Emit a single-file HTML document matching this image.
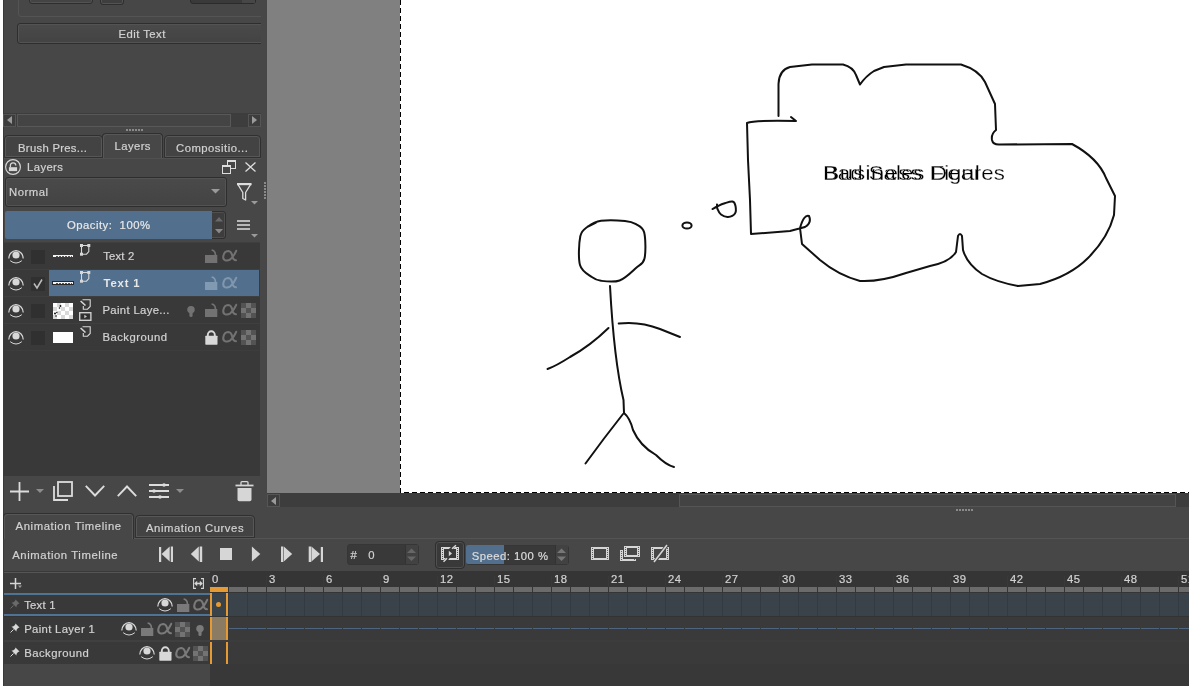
<!DOCTYPE html>
<html><head><meta charset="utf-8">
<style>
*{box-sizing:border-box;margin:0;padding:0}
html,body{width:1189px;height:686px;overflow:hidden;background:#474747;font-family:"Liberation Sans",sans-serif;font-size:11.3px;color:#d2d2d2}
.a{position:absolute}
.t{position:absolute;white-space:nowrap;line-height:1;-webkit-text-stroke:0.2px currentColor}
.btn{position:absolute;border:1px solid #2e2e2e;border-radius:3px;background:linear-gradient(#4a4a4a,#434343);box-shadow:inset 0 0 0 1px #535353}
.tab{position:absolute;border:1px solid #303030;border-radius:4px 4px 0 0;background:#434343;box-shadow:inset 0 0 0 1px #575757}
.tab.sel{background:#474747;border-bottom:none;box-shadow:inset 1px 1px 0 #575757,inset -1px 0 0 #575757}
svg{position:absolute;overflow:visible}
.clip{position:absolute;left:0;top:0;overflow:hidden}
</style></head><body>
<div class="a" style="left:0;top:0;width:3px;height:686px;background:#fff"></div>
<div class="a" style="left:3px;top:0;width:1px;height:686px;background:#3a3a3a"></div>

<!-- ===== LEFT DOCKER ===== -->
<div class="clip" style="width:261px;height:113px">
  <div class="btn" style="left:29px;top:-10px;width:64px;height:14px"></div>
  <div class="btn" style="left:100px;top:-10px;width:24px;height:15px;background:#3e3e3e"></div>
  <div class="a" style="left:190px;top:-10px;width:66px;height:14px;border:1px solid #2b2b2b;border-radius:3px;background:#3a3a3a"></div>
  <div class="a" style="left:242px;top:-10px;width:13px;height:13px;background:#474747"></div>
  <div class="a" style="left:18px;top:-10px;width:260px;height:27px;border:1px solid #545454;border-radius:3px"></div>
  <div class="btn" style="left:17px;top:23px;width:260px;height:21px"></div>
  <div class="t" style="left:118.5px;top:29.4px;letter-spacing:0.46px">Edit Text</div>
</div>
<!-- h scrollbar of tool options -->
<div class="a" style="left:3px;top:113px;width:258px;height:14px;background:#3d3d3d"></div>
<div class="a" style="left:3px;top:114px;width:13px;height:13px;border:1px solid #555"></div>
<svg style="left:7px;top:116px" width="6" height="8"><path d="M5 0 L0 4 L5 8Z" fill="#9a9a9a"/></svg>
<div class="a" style="left:17px;top:114px;width:214px;height:13px;border:1px solid #585858;background:#444"></div>
<div class="a" style="left:248px;top:114px;width:13px;height:13px;border:1px solid #555"></div>
<svg style="left:252px;top:116px" width="6" height="8"><path d="M0 0 L5 4 L0 8Z" fill="#9a9a9a"/></svg>
<!-- splitter dots -->
<div class="a" style="left:126px;top:129px;width:17px;height:2px;background-image:linear-gradient(90deg,#8a8a8a 2px,transparent 2px);background-size:3px 2px"></div>

<!-- tabs -->

<div class="tab" style="left:4px;top:135px;width:99px;height:23px"></div>
<div class="t" style="left:18px;top:142.6px;letter-spacing:0.29px">Brush Pres...</div>
<div class="tab sel" style="left:102px;top:133px;width:61px;height:25px"></div>
<div class="t" style="left:114.5px;top:141.2px;letter-spacing:0.42px">Layers</div>
<div class="tab" style="left:164px;top:135px;width:97px;height:23px"></div>
<div class="t" style="left:176px;top:142.6px;letter-spacing:0.49px">Compositio...</div>

<div class="a" style="left:4px;top:158px;width:257px;height:1px;background:#505050"></div>
<!-- Layers title -->
<svg style="left:5px;top:159px" width="17" height="17" viewBox="0 0 17 17"><circle cx="8" cy="8" r="7.4" fill="none" stroke="#d6d6d6" stroke-width="1.2"/><path d="M5.4 8.3 V6.6 A2.7 2.7 0 0 1 10.8 6.4" fill="none" stroke="#d6d6d6" stroke-width="1.3"/><rect x="3.9" y="8.2" width="8.2" height="3.9" fill="#d6d6d6"/></svg>
<div class="t" style="left:27.1px;top:162.4px;letter-spacing:0.38px">Layers</div>
<svg style="left:222px;top:160px" width="15" height="15"><rect x="5.5" y="0.5" width="8" height="8" fill="none" stroke="#ddd"/><rect x="5" y="0" width="9" height="2" fill="#ddd"/><rect x="0.5" y="5.5" width="8" height="8" fill="#474747" stroke="#ddd"/><rect x="0" y="5" width="9" height="2" fill="#ddd"/></svg>
<svg style="left:245px;top:162px" width="11" height="10"><path d="M0.5 0.5 L10.5 9.5 M10.5 0.5 L0.5 9.5" stroke="#ddd" stroke-width="1.3"/></svg>

<!-- combo -->
<div class="btn" style="left:5px;top:177px;width:222px;height:30px"></div>
<div class="t" style="left:9.1px;top:187.2px;letter-spacing:0.52px">Normal</div>
<svg style="left:211px;top:189px" width="9" height="5"><path d="M0 0H9L4.5 4.5Z" fill="#9a9a9a"/></svg>
<svg style="left:237px;top:183px" width="15" height="18"><path d="M0.7 1.2 H13.8 L8.6 9.5 V17 L5.8 15.5 V9.5 Z" fill="none" stroke="#ddd" stroke-width="1.3" stroke-linejoin="round"/><rect x="0" y="0" width="14.5" height="2.2" fill="#ddd"/></svg>
<svg style="left:251px;top:201px" width="7" height="4"><path d="M0 0H7L3.5 3.5Z" fill="#9a9a9a"/></svg>
<div class="a" style="left:264px;top:182px;width:2px;height:17px;background-image:linear-gradient(#8a8a8a 2px,transparent 2px);background-size:2px 3px"></div>

<!-- opacity -->
<div class="a" style="left:5px;top:211px;width:221px;height:28px;border:1px solid #2f2f2f;border-radius:3px;background:#3d3d3d;box-shadow:inset 0 0 0 1px #4f4f4f"></div>
<div class="a" style="left:5px;top:211px;width:207px;height:28px;background:#526f8d;border-radius:2px 0 0 2px"></div>
<div class="t" style="left:67px;top:220.4px;letter-spacing:0.49px;color:#e8e8e8">Opacity:&nbsp; 100%</div>
<svg style="left:215px;top:217px" width="8" height="5"><path d="M0 4.5H8L4 0Z" fill="#6a6a6a"/></svg>
<svg style="left:215px;top:229px" width="8" height="5"><path d="M0 0H8L4 4.5Z" fill="#8a8a8a"/></svg>
<svg style="left:237px;top:220px" width="13" height="10"><path d="M0 1H13M0 5H13M0 9H13" stroke="#ddd" stroke-width="1.6"/></svg>
<svg style="left:251px;top:234px" width="7" height="4"><path d="M0 0H7L3.5 3.5Z" fill="#9a9a9a"/></svg>

<!-- layer list -->
<div class="a" style="left:4px;top:242px;width:256px;height:234px;background:#393939"></div>
<div class="a" style="left:4px;top:242px;width:256px;height:1px;background:#3f3f3f"></div>
<svg style="left:8px;top:250px" width="16" height="15" viewBox="0 0 16 15"><path d="M0.8 8.6 A7.2 7.9 0 0 1 15.2 8.6" fill="none" stroke="#d8d8d8" stroke-width="1.2"/><circle cx="8" cy="5" r="3.6" fill="#d8d8d8"/><path d="M2.2 10.7 Q8 15.3 13.8 10.7" fill="none" stroke="#d8d8d8" stroke-width="1.0"/></svg>
<div class="a" style="left:31px;top:250px;width:14px;height:14px;background:#303030"></div>
<div class="a" style="left:53px;top:255px;width:20px;height:2px;background:#f4f4f4"></div>
<div class="a" style="left:56px;top:256px;width:16px;height:1px;background-image:linear-gradient(90deg,#555 2px,transparent 2px);background-size:3px 1px"></div>
<svg style="left:80px;top:244px" width="11" height="12" viewBox="0 0 11 12"><path d="M1.5 1.5 H8.8 V7.5 L6.5 10.2 H1.5 Z" fill="none" stroke="#d8d8d8" stroke-width="1.1"/><rect x="0" y="0" width="3" height="3" fill="#d8d8d8"/><rect x="7.3" y="0" width="3" height="3" fill="#d8d8d8"/><rect x="0" y="8.7" width="3" height="3" fill="#d8d8d8"/></svg>
<div class="t" style="left:103.2px;top:251.4px;letter-spacing:0.17px;color:#d2d2d2;font-weight:normal">Text 2</div>
<svg style="left:205px;top:249px" width="13" height="15" viewBox="0 0 13 15"><path d="M6.6 1 Q10.2 1.6 10.4 5.5 V6.5" fill="none" stroke="#727272" stroke-width="1.7"/><rect x="0" y="6" width="12.3" height="8" fill="#727272"/></svg>
<svg style="left:222px;top:250px" width="15" height="12" viewBox="0 0 15 12"><path d="M14.2 0.8 Q11.5 6.8 8.3 9.3 Q5.8 11 3.2 10.3 Q0.8 9.5 1.3 6.2 Q2.2 1.2 6.3 1.1 Q9.2 1.2 10.4 6.2 Q11.3 10.2 14 10.3" fill="none" stroke="#727272" stroke-width="2.05" stroke-linecap="round"/></svg>
<div class="a" style="left:4px;top:269px;width:256px;height:1px;background:#3f3f3f"></div>
<div class="a" style="left:49px;top:270px;width:210px;height:26px;background:#526f8d"></div>
<svg style="left:8px;top:277px" width="16" height="15" viewBox="0 0 16 15"><path d="M0.8 8.6 A7.2 7.9 0 0 1 15.2 8.6" fill="none" stroke="#d8d8d8" stroke-width="1.2"/><circle cx="8" cy="5" r="3.6" fill="#d8d8d8"/><path d="M2.2 10.7 Q8 15.3 13.8 10.7" fill="none" stroke="#d8d8d8" stroke-width="1.0"/></svg>
<div class="a" style="left:31px;top:277px;width:14px;height:14px;background:#303030"></div>
<svg style="left:33px;top:279px" width="10" height="10"><path d="M1 4.5 L4 9 L9 0.5" fill="none" stroke="#bdbdbd" stroke-width="1.5"/></svg>
<div class="a" style="left:52px;top:281px;width:22px;height:4px;background:#262626"></div>
<div class="a" style="left:53px;top:282px;width:20px;height:2px;background:#f4f4f4"></div>
<div class="a" style="left:56px;top:283px;width:16px;height:1px;background-image:linear-gradient(90deg,#555 2px,transparent 2px);background-size:3px 1px"></div>
<svg style="left:80px;top:271px" width="11" height="12" viewBox="0 0 11 12"><path d="M1.5 1.5 H8.8 V7.5 L6.5 10.2 H1.5 Z" fill="none" stroke="#d8d8d8" stroke-width="1.1"/><rect x="0" y="0" width="3" height="3" fill="#d8d8d8"/><rect x="7.3" y="0" width="3" height="3" fill="#d8d8d8"/><rect x="0" y="8.7" width="3" height="3" fill="#d8d8d8"/></svg>
<div class="t" style="left:103.5px;top:278.0px;letter-spacing:0.84px;color:#e8e8e8;font-weight:bold;-webkit-text-stroke:0">Text 1</div>
<svg style="left:205px;top:276px" width="13" height="15" viewBox="0 0 13 15"><path d="M6.6 1 Q10.2 1.6 10.4 5.5 V6.5" fill="none" stroke="#8199b1" stroke-width="1.7"/><rect x="0" y="6" width="12.3" height="8" fill="#8199b1"/></svg>
<svg style="left:222px;top:277px" width="15" height="12" viewBox="0 0 15 12"><path d="M14.2 0.8 Q11.5 6.8 8.3 9.3 Q5.8 11 3.2 10.3 Q0.8 9.5 1.3 6.2 Q2.2 1.2 6.3 1.1 Q9.2 1.2 10.4 6.2 Q11.3 10.2 14 10.3" fill="none" stroke="#7f96ad" stroke-width="2.05" stroke-linecap="round"/></svg>
<div class="a" style="left:4px;top:296px;width:256px;height:1px;background:#3f3f3f"></div>
<svg style="left:8px;top:304px" width="16" height="15" viewBox="0 0 16 15"><path d="M0.8 8.6 A7.2 7.9 0 0 1 15.2 8.6" fill="none" stroke="#d8d8d8" stroke-width="1.2"/><circle cx="8" cy="5" r="3.6" fill="#d8d8d8"/><path d="M2.2 10.7 Q8 15.3 13.8 10.7" fill="none" stroke="#d8d8d8" stroke-width="1.0"/></svg>
<div class="a" style="left:31px;top:304px;width:14px;height:14px;background:#303030"></div>
<svg style="left:53px;top:303px" width="20" height="14" viewBox="0 0 20 14"><rect x="0" y="0" width="4" height="4" fill="#ffffff"/><rect x="0" y="4" width="4" height="4" fill="#d9d9d9"/><rect x="0" y="8" width="4" height="4" fill="#ffffff"/><rect x="0" y="12" width="4" height="4" fill="#d9d9d9"/><rect x="4" y="0" width="4" height="4" fill="#d9d9d9"/><rect x="4" y="4" width="4" height="4" fill="#ffffff"/><rect x="4" y="8" width="4" height="4" fill="#d9d9d9"/><rect x="4" y="12" width="4" height="4" fill="#ffffff"/><rect x="8" y="0" width="4" height="4" fill="#ffffff"/><rect x="8" y="4" width="4" height="4" fill="#d9d9d9"/><rect x="8" y="8" width="4" height="4" fill="#ffffff"/><rect x="8" y="12" width="4" height="4" fill="#d9d9d9"/><rect x="12" y="0" width="4" height="4" fill="#d9d9d9"/><rect x="12" y="4" width="4" height="4" fill="#ffffff"/><rect x="12" y="8" width="4" height="4" fill="#d9d9d9"/><rect x="12" y="12" width="4" height="4" fill="#ffffff"/><rect x="16" y="0" width="4" height="4" fill="#ffffff"/><rect x="16" y="4" width="4" height="4" fill="#d9d9d9"/><rect x="16" y="8" width="4" height="4" fill="#ffffff"/><rect x="16" y="12" width="4" height="4" fill="#d9d9d9"/><circle cx="7.5" cy="3" r="0.9" fill="#111"/><circle cx="6.5" cy="5" r="0.8" fill="#111"/><circle cx="2" cy="10.5" r="1" fill="#111"/><circle cx="3.8" cy="9.5" r="0.7" fill="#111"/><circle cx="3" cy="13" r="0.8" fill="#111"/></svg>
<svg style="left:80px;top:299px" width="11" height="11" viewBox="0 0 11 11"><path d="M2.5 0.8 H10.2 V7.5 L7.5 10.2 H3.3 V7" fill="none" stroke="#d8d8d8" stroke-width="1.1"/><path d="M0.6 2 L5.5 6.5" stroke="#d8d8d8" stroke-width="1.6"/></svg>
<svg style="left:79px;top:312px" width="13" height="9" viewBox="0 0 13 9"><rect x="0.7" y="0.7" width="11.2" height="7.6" fill="none" stroke="#d8d8d8" stroke-width="1.3"/><rect x="2.3" y="2.3" width="8" height="4.4" fill="#2e2e2e"/><path d="M5.3 2.8 V6.2 L8 4.5Z" fill="#c8c8c8"/></svg>
<div class="t" style="left:102.4px;top:304.5px;letter-spacing:0.35px;color:#d2d2d2;font-weight:normal">Paint Laye...</div>
<svg style="left:205px;top:303px" width="13" height="15" viewBox="0 0 13 15"><path d="M6.6 1 Q10.2 1.6 10.4 5.5 V6.5" fill="none" stroke="#727272" stroke-width="1.7"/><rect x="0" y="6" width="12.3" height="8" fill="#727272"/></svg>
<svg style="left:222px;top:304px" width="15" height="12" viewBox="0 0 15 12"><path d="M14.2 0.8 Q11.5 6.8 8.3 9.3 Q5.8 11 3.2 10.3 Q0.8 9.5 1.3 6.2 Q2.2 1.2 6.3 1.1 Q9.2 1.2 10.4 6.2 Q11.3 10.2 14 10.3" fill="none" stroke="#727272" stroke-width="2.05" stroke-linecap="round"/></svg>
<svg style="left:241px;top:303px" width="15" height="15"><rect x="0" y="0" width="5" height="5" fill="#535353"/><rect x="0" y="5" width="5" height="5" fill="#737373"/><rect x="0" y="10" width="5" height="5" fill="#535353"/><rect x="5" y="0" width="5" height="5" fill="#737373"/><rect x="5" y="5" width="5" height="5" fill="#535353"/><rect x="5" y="10" width="5" height="5" fill="#737373"/><rect x="10" y="0" width="5" height="5" fill="#535353"/><rect x="10" y="5" width="5" height="5" fill="#737373"/><rect x="10" y="10" width="5" height="5" fill="#535353"/></svg>
<svg style="left:187px;top:306px" width="8" height="11" viewBox="0 0 8 11"><path d="M4 0 A3.8 3.9 0 0 1 7.8 3.9 Q7.8 5.8 5.6 7.3 V9.8 Q5.6 11 4 11 Q2.4 11 2.4 9.8 V7.3 Q0.2 5.8 0.2 3.9 A3.8 3.9 0 0 1 4 0Z" fill="#727272"/></svg>
<div class="a" style="left:4px;top:323px;width:256px;height:1px;background:#3f3f3f"></div>
<svg style="left:8px;top:331px" width="16" height="15" viewBox="0 0 16 15"><path d="M0.8 8.6 A7.2 7.9 0 0 1 15.2 8.6" fill="none" stroke="#d8d8d8" stroke-width="1.2"/><circle cx="8" cy="5" r="3.6" fill="#d8d8d8"/><path d="M2.2 10.7 Q8 15.3 13.8 10.7" fill="none" stroke="#d8d8d8" stroke-width="1.0"/></svg>
<div class="a" style="left:31px;top:331px;width:14px;height:14px;background:#303030"></div>
<div class="a" style="left:53px;top:332px;width:20px;height:11px;background:#fff"></div>
<svg style="left:80px;top:326px" width="11" height="11" viewBox="0 0 11 11"><path d="M2.5 0.8 H10.2 V7.5 L7.5 10.2 H3.3 V7" fill="none" stroke="#d8d8d8" stroke-width="1.1"/><path d="M0.6 2 L5.5 6.5" stroke="#d8d8d8" stroke-width="1.6"/></svg>
<div class="t" style="left:102.4px;top:331.6px;letter-spacing:0.49px;color:#d2d2d2;font-weight:normal">Background</div>
<svg style="left:205px;top:330px" width="13" height="15" viewBox="0 0 13 15"><path d="M2.8 6.5 V5 A3.5 3.7 0 0 1 9.8 5 V6.5" fill="none" stroke="#d8d8d8" stroke-width="1.9"/><rect x="0.3" y="5.7" width="12.2" height="9" rx="0.6" fill="#d8d8d8"/></svg>
<svg style="left:222px;top:331px" width="15" height="12" viewBox="0 0 15 12"><path d="M14.2 0.8 Q11.5 6.8 8.3 9.3 Q5.8 11 3.2 10.3 Q0.8 9.5 1.3 6.2 Q2.2 1.2 6.3 1.1 Q9.2 1.2 10.4 6.2 Q11.3 10.2 14 10.3" fill="none" stroke="#727272" stroke-width="2.05" stroke-linecap="round"/></svg>
<svg style="left:241px;top:330px" width="15" height="15"><rect x="0" y="0" width="5" height="5" fill="#535353"/><rect x="0" y="5" width="5" height="5" fill="#737373"/><rect x="0" y="10" width="5" height="5" fill="#535353"/><rect x="5" y="0" width="5" height="5" fill="#737373"/><rect x="5" y="5" width="5" height="5" fill="#535353"/><rect x="5" y="10" width="5" height="5" fill="#737373"/><rect x="10" y="0" width="5" height="5" fill="#535353"/><rect x="10" y="5" width="5" height="5" fill="#737373"/><rect x="10" y="10" width="5" height="5" fill="#535353"/></svg>
<div class="a" style="left:4px;top:350px;width:256px;height:1px;background:#3d3d3d"></div>

<!-- bottom toolbar -->
<svg style="left:10px;top:482px" width="19" height="19"><path d="M9.5 0V19M0 9.5H19" stroke="#dcdcdc" stroke-width="1.8"/></svg>
<svg style="left:36px;top:489px" width="8" height="5"><path d="M0 0H8L4 4Z" fill="#8d8d8d"/></svg>
<svg style="left:53px;top:481px" width="20" height="20"><rect x="5" y="1" width="14" height="14" fill="none" stroke="#dcdcdc" stroke-width="1.8"/><path d="M1 5V19H15" fill="none" stroke="#dcdcdc" stroke-width="1.8"/></svg>
<svg style="left:85px;top:485px" width="20" height="12"><path d="M0.8 0.8 L10 10.5 L19.2 0.8" fill="none" stroke="#dcdcdc" stroke-width="1.9"/></svg>
<svg style="left:117px;top:485px" width="20" height="12"><path d="M0.8 11.2 L10 1.5 L19.2 11.2" fill="none" stroke="#dcdcdc" stroke-width="1.9"/></svg>
<svg style="left:149px;top:483px" width="20" height="16"><path d="M0 2H20M0 8H20M0 14H20" stroke="#dcdcdc" stroke-width="1.8"/><circle cx="15" cy="2" r="1.8" fill="#dcdcdc"/><circle cx="5" cy="8" r="1.8" fill="#dcdcdc"/><circle cx="11" cy="14" r="1.8" fill="#dcdcdc"/></svg>
<svg style="left:176px;top:489px" width="8" height="5"><path d="M0 0H8L4 4Z" fill="#8d8d8d"/></svg>
<svg style="left:235px;top:481px" width="19" height="21"><path d="M0.5 4.5H18.5" stroke="#d6d6d6" stroke-width="1.8"/><path d="M6 4V1.5Q6 0.6 7 0.6H12Q13 0.6 13 1.5V4" fill="none" stroke="#d6d6d6" stroke-width="1.3"/><path d="M2.5 7H16.5V18.5Q16.5 20.3 14.7 20.3H4.3Q2.5 20.3 2.5 18.5Z" fill="#d6d6d6"/></svg>

<!-- ===== CANVAS ===== -->
<div class="a" style="left:267px;top:0;width:922px;height:493px;background:#808080;overflow:hidden">
  <div class="a" style="left:133px;top:-10px;width:800px;height:503px;background:#fff"></div>
  <div class="a" style="left:133px;top:0;width:1px;height:493px;background-image:linear-gradient(#000 5px,transparent 5px);background-size:1px 8px"></div>
  <div class="a" style="left:133px;top:492px;width:800px;height:1px;background-image:linear-gradient(90deg,#000 5px,transparent 5px);background-size:8px 1px;background-position:-4px 0"></div>
  <svg style="left:-267px;top:0" width="1189" height="493" viewBox="0 0 1189 493">
<g fill="none" stroke="#111" stroke-width="2" stroke-linecap="round" stroke-linejoin="round">
<!-- cloud -->
<path d="M778.5 116 L778.5 84 Q779 70 790 67 L812 64.5 L843 64.5 Q853 67 856 75 L860 84.5 Q866 76 874 71 L884 67 L906 64.5 L961 64.5 Q979 70 985 82 L995 104 L996 130 Q991 134 992 140 Q993 145 1000 144.5 L1072 144 Q1098 158 1106 178 L1115 196 L1114 215 Q1108 238 1088 258 Q1070 276 1040 284 L1018 286 Q996 282 982 274 Q967 264 963 250 L962 236 Q960 232 958 236 L956 252 Q950 262 930 266 L906 273 Q880 282 860 281 Q838 275 820 260 L802 244 L800 228 Q804 214 809 216 Q812 223 805 227 L790 231 L751 234 L750 200 L748 160 L747 123 Q755 120 796 121 L791 117"/>
<!-- head -->
<path d="M588 226.5 C591.5 223.9 594.8 221.7 601 220.8 C607.2 219.9 619.2 220.4 625 221 C630.8 221.6 632.8 222.3 636 224.2 C639.2 226.1 642.8 226.9 644.2 232.6 C645.6 238.3 645.9 252.6 644.5 258.5 C643.1 264.4 640.1 264.3 636 268 C631.9 271.7 625.4 278.4 619.6 280.5 C613.8 282.6 605.6 281.4 601 280.8 C596.4 280.2 595.3 279.6 591.8 277 C588.3 274.4 581.9 271.8 580 265 C578.1 258.2 579.0 242.7 580.3 236.3 C581.6 229.9 584.5 229.1 588 226.5 M588 226.5 L596 222.5"/>
<!-- body -->
<path d="M610 286 Q614 360 623.5 400 L624 413"/>
<path d="M608.5 328 Q590 346 570 357 Q556 366 547.5 369"/>
<path d="M618.7 323.5 Q640 321 660 329 L680 337"/>
<path d="M623 414 Q604 438 585.5 463.5"/>
<path d="M624 413 Q630 418 633 430 Q640 446 656 455 Q666 465 674 467"/>
<!-- bubbles -->
<ellipse cx="687" cy="225.5" rx="4.6" ry="3.1"/>
<path d="M712.5 209 C713.4 208.5 716.1 206.9 718 206 C719.9 205.1 721.6 204.2 724 203.5 C726.4 202.8 730.6 201.1 732.5 201.5 C734.4 201.9 735.1 204.0 735.5 206 C735.9 208.0 736.2 211.7 735 213.5 C733.8 215.3 730.3 216.8 728 217 C725.7 217.2 722.8 215.8 721 214.5 C719.2 213.2 718.2 210.7 717.5 209 C716.8 207.3 717.1 205.2 717 204.5"/>
</g>
<g font-family="Liberation Sans" font-size="21" fill="#000" stroke="#fff" stroke-width="0.25">
<text transform="translate(823 179.5) scale(1.06 1)" style="mix-blend-mode:darken">Bad Sales Figures</text>
<text transform="translate(823 179.5) scale(1.17 1)" style="mix-blend-mode:darken">Business Deal</text>
</g>
</svg>

</div>

<!-- canvas h scrollbar -->
<div class="a" style="left:267px;top:493px;width:922px;height:14px;background:#3d3d3d"></div>
<div class="a" style="left:267px;top:494px;width:13px;height:13px;border:1px solid #555"></div>
<svg style="left:271px;top:497px" width="6" height="8"><path d="M5 0 L0 4 L5 8Z" fill="#9a9a9a"/></svg>
<div class="a" style="left:679px;top:494px;width:497px;height:13px;border:1px solid #555;background:#434343"></div>
<div class="a" style="left:956px;top:509px;width:17px;height:2px;background-image:linear-gradient(90deg,#8a8a8a 2px,transparent 2px);background-size:3px 2px"></div>

<!-- ===== TIMELINE DOCKER ===== -->
<div class="a" style="left:4px;top:538px;width:1185px;height:1px;background:#545454"></div>
<div class="tab sel" style="left:3px;top:513px;width:131px;height:26px"></div>
<div class="t" style="left:15.5px;top:520.5px;letter-spacing:0.6px">Animation Timeline</div>
<div class="tab" style="left:135px;top:515px;width:120px;height:23px"></div>
<div class="t" style="left:146px;top:522.5px;letter-spacing:0.56px">Animation Curves</div>
<div class="t" style="left:12.2px;top:550.1px;letter-spacing:0.59px">Animation Timeline</div>
<svg style="left:158px;top:546px" width="16" height="16" viewBox="0 0 16 16"><rect x="1" y="1" width="2.2" height="15" fill="#d6d6d6"/><path d="M11.7 0.5 V15.5 L3.6 8Z" fill="#d6d6d6"/><rect x="12.8" y="0.5" width="2.2" height="15.5" fill="#d6d6d6"/></svg>
<svg style="left:190px;top:546px" width="13" height="16" viewBox="0 0 13 16"><path d="M8.8 0.5 V15.5 L0.8 8Z" fill="#d6d6d6"/><rect x="9.7" y="0.5" width="2.5" height="15.5" fill="#d6d6d6"/></svg>
<div class="a" style="left:220px;top:548px;width:12px;height:12px;background:#d6d6d6"></div>
<svg style="left:251px;top:546px" width="10" height="16" viewBox="0 0 10 16"><path d="M0.9 0.5 V15.5 L9.3 8Z" fill="#d6d6d6"/></svg>
<svg style="left:281px;top:546px" width="12" height="16" viewBox="0 0 12 16"><rect x="0" y="0.5" width="2.3" height="15.5" fill="#d6d6d6"/><path d="M2.8 0.5 V15.5 L11.2 8Z" fill="#d6d6d6"/></svg>
<svg style="left:308px;top:546px" width="16" height="16" viewBox="0 0 16 16"><rect x="0.7" y="0.5" width="2.5" height="15.5" fill="#d6d6d6"/><path d="M3.5 0.5 V15.5 L12 8Z" fill="#d6d6d6"/><rect x="12.8" y="1" width="2.2" height="15" fill="#d6d6d6"/></svg>
<div class="a" style="left:347px;top:544px;width:72px;height:21px;border:1px solid #363636;border-radius:3px;background:#393939"></div>
<div class="a" style="left:405px;top:545px;width:13px;height:19px;background:#424242;border-left:1px solid #333"></div>
<svg style="left:407px;top:548px" width="9" height="14"><path d="M0 5H9L4.5 0.5Z" fill="#666"/><path d="M0 8.5H9L4.5 13Z" fill="#666"/></svg>
<div class="t" style="left:350.6px;top:549.6px;letter-spacing:0.5px">#&nbsp;&nbsp; 0</div>
<div class="a" style="left:435px;top:541px;width:30px;height:28px;border:1px solid #2e2e2e;border-radius:4px;background:#393939;box-shadow:inset 0 0 0 1px #505050"></div>
<svg style="left:441px;top:547px" width="19" height="15" viewBox="0 0 19 15"><rect x="0" y="0" width="18" height="13" fill="#d6d6d6"/><rect x="3" y="2" width="12" height="9" fill="#393939"/><circle cx="1.5" cy="1.5" r="0.55" fill="#393939"/><circle cx="16.5" cy="1.5" r="0.55" fill="#393939"/><circle cx="1.5" cy="3.5" r="0.55" fill="#393939"/><circle cx="16.5" cy="3.5" r="0.55" fill="#393939"/><circle cx="1.5" cy="5.5" r="0.55" fill="#393939"/><circle cx="16.5" cy="5.5" r="0.55" fill="#393939"/><circle cx="1.5" cy="7.5" r="0.55" fill="#393939"/><circle cx="16.5" cy="7.5" r="0.55" fill="#393939"/><circle cx="1.5" cy="9.5" r="0.55" fill="#393939"/><circle cx="16.5" cy="9.5" r="0.55" fill="#393939"/><circle cx="1.5" cy="11.5" r="0.55" fill="#393939"/><circle cx="16.5" cy="11.5" r="0.55" fill="#393939"/><path d="M7.8 3.8 V9.2 L11 6.5Z" fill="#d6d6d6"/><path d="M9 3 L14.5 -2.5 M3 15 L7.5 10.5" stroke="#393939" stroke-width="3"/><path d="M11 1.7 L15 -1.8 M2.5 14.8 L6 11.3" stroke="#d6d6d6" stroke-width="1.5"/></svg>
<div class="a" style="left:466px;top:545px;width:103px;height:20px;border-radius:3px;background:#393939;border:1px solid #363636"></div>
<div class="a" style="left:466px;top:545px;width:38px;height:19px;background:#526f8d;border-radius:2px 0 0 2px"></div>
<div class="a" style="left:555px;top:545px;width:13px;height:19px;background:#424242;border-left:1px solid #333"></div>
<svg style="left:557px;top:548px" width="9" height="14"><path d="M0 5H9L4.5 0.5Z" fill="#777"/><path d="M0 8.5H9L4.5 13Z" fill="#777"/></svg>
<div class="t" style="left:471.7px;top:550.6px;letter-spacing:0.48px;color:#dcdcdc">Speed: 100 %</div>
<svg style="left:591px;top:547px" width="18" height="13"><rect x="0" y="0" width="18" height="13" fill="#d6d6d6"/><rect x="3" y="2" width="12" height="9" fill="#474747"/><circle cx="1.5" cy="1.5" r="0.55" fill="#474747"/><circle cx="16.5" cy="1.5" r="0.55" fill="#474747"/><circle cx="1.5" cy="3.5" r="0.55" fill="#474747"/><circle cx="16.5" cy="3.5" r="0.55" fill="#474747"/><circle cx="1.5" cy="5.5" r="0.55" fill="#474747"/><circle cx="16.5" cy="5.5" r="0.55" fill="#474747"/><circle cx="1.5" cy="7.5" r="0.55" fill="#474747"/><circle cx="16.5" cy="7.5" r="0.55" fill="#474747"/><circle cx="1.5" cy="9.5" r="0.55" fill="#474747"/><circle cx="16.5" cy="9.5" r="0.55" fill="#474747"/><circle cx="1.5" cy="11.5" r="0.55" fill="#474747"/><circle cx="16.5" cy="11.5" r="0.55" fill="#474747"/></svg>
<svg style="left:620px;top:546px" width="21" height="16"><g transform="translate(0,4)"><rect x="0" y="0" width="16" height="11" fill="#d6d6d6"/><rect x="3" y="2" width="10" height="7" fill="#474747"/><circle cx="1.5" cy="1.5" r="0.55" fill="#474747"/><circle cx="14.5" cy="1.5" r="0.55" fill="#474747"/><circle cx="1.5" cy="3.5" r="0.55" fill="#474747"/><circle cx="14.5" cy="3.5" r="0.55" fill="#474747"/><circle cx="1.5" cy="5.5" r="0.55" fill="#474747"/><circle cx="14.5" cy="5.5" r="0.55" fill="#474747"/><circle cx="1.5" cy="7.5" r="0.55" fill="#474747"/><circle cx="14.5" cy="7.5" r="0.55" fill="#474747"/><circle cx="1.5" cy="9.5" r="0.55" fill="#474747"/><circle cx="14.5" cy="9.5" r="0.55" fill="#474747"/></g><rect x="3" y="-1" width="18" height="14" fill="#474747"/><g transform="translate(4,0)"><rect x="0" y="0" width="16" height="11" fill="#d6d6d6"/><rect x="3" y="2" width="10" height="7" fill="#474747"/><circle cx="1.5" cy="1.5" r="0.55" fill="#474747"/><circle cx="14.5" cy="1.5" r="0.55" fill="#474747"/><circle cx="1.5" cy="3.5" r="0.55" fill="#474747"/><circle cx="14.5" cy="3.5" r="0.55" fill="#474747"/><circle cx="1.5" cy="5.5" r="0.55" fill="#474747"/><circle cx="14.5" cy="5.5" r="0.55" fill="#474747"/><circle cx="1.5" cy="7.5" r="0.55" fill="#474747"/><circle cx="14.5" cy="7.5" r="0.55" fill="#474747"/><circle cx="1.5" cy="9.5" r="0.55" fill="#474747"/><circle cx="14.5" cy="9.5" r="0.55" fill="#474747"/></g></svg>
<svg style="left:651px;top:545px" width="19" height="18"><g transform="translate(0,2)"><rect x="0" y="0" width="18" height="13" fill="#d6d6d6"/><rect x="3" y="2" width="12" height="9" fill="#474747"/><circle cx="1.5" cy="1.5" r="0.55" fill="#474747"/><circle cx="16.5" cy="1.5" r="0.55" fill="#474747"/><circle cx="1.5" cy="3.5" r="0.55" fill="#474747"/><circle cx="16.5" cy="3.5" r="0.55" fill="#474747"/><circle cx="1.5" cy="5.5" r="0.55" fill="#474747"/><circle cx="16.5" cy="5.5" r="0.55" fill="#474747"/><circle cx="1.5" cy="7.5" r="0.55" fill="#474747"/><circle cx="16.5" cy="7.5" r="0.55" fill="#474747"/><circle cx="1.5" cy="9.5" r="0.55" fill="#474747"/><circle cx="16.5" cy="9.5" r="0.55" fill="#474747"/><circle cx="1.5" cy="11.5" r="0.55" fill="#474747"/><circle cx="16.5" cy="11.5" r="0.55" fill="#474747"/></g><path d="M16.5 -0.5 L3 17.5" stroke="#474747" stroke-width="3.5"/><path d="M16 0 L3 17" stroke="#d6d6d6" stroke-width="1.6"/></svg>
<div class="a" style="left:4px;top:571px;width:206px;height:1px;background:#393939"></div>
<div class="a" style="left:4px;top:572px;width:206px;height:1px;background:#555"></div>
<div class="a" style="left:4px;top:573px;width:206px;height:20px;background:#3b3b3b"></div>
<svg style="left:10px;top:578px" width="13" height="11"><path d="M5.5 0V11M0 5.5H11" stroke="#d6d6d6" stroke-width="1.5"/><path d="M8 7.5H12L10 10Z" fill="#999"/></svg>
<svg style="left:193px;top:578px" width="11" height="11" viewBox="0 0 11 11"><path d="M3 0.6 H0.6 V10.4 H3 M8 0.6 H10.4 V10.4 H8" fill="none" stroke="#d6d6d6" stroke-width="1.1"/><path d="M2.5 5.5 H8.5" stroke="#d6d6d6" stroke-width="1.6"/><path d="M1.2 5.5 L4.2 2.8 V8.2Z M9.8 5.5 L6.8 2.8 V8.2Z" fill="#d6d6d6"/></svg>
<div class="a" style="left:210px;top:571px;width:979px;height:22px;background:#353535"></div>
<div class="a" style="left:210px;top:587px;width:18px;height:5px;background:#e69a33"></div>
<div class="t" style="left:212px;top:573.9px;letter-spacing:0.5px;color:#d2d2d2">0</div>
<div class="a" style="left:229px;top:587px;width:18px;height:5px;background:#6b6b6b"></div>
<div class="a" style="left:248px;top:587px;width:18px;height:5px;background:#6b6b6b"></div>
<div class="a" style="left:267px;top:587px;width:18px;height:5px;background:#6b6b6b"></div>
<div class="a" style="left:266px;top:576px;width:1px;height:11px;background:#393939"></div>
<div class="t" style="left:269px;top:573.9px;letter-spacing:0.5px;color:#d2d2d2">3</div>
<div class="a" style="left:286px;top:587px;width:18px;height:5px;background:#6b6b6b"></div>
<div class="a" style="left:305px;top:587px;width:18px;height:5px;background:#6b6b6b"></div>
<div class="a" style="left:324px;top:587px;width:18px;height:5px;background:#6b6b6b"></div>
<div class="a" style="left:323px;top:576px;width:1px;height:11px;background:#393939"></div>
<div class="t" style="left:326px;top:573.9px;letter-spacing:0.5px;color:#d2d2d2">6</div>
<div class="a" style="left:343px;top:587px;width:18px;height:5px;background:#6b6b6b"></div>
<div class="a" style="left:362px;top:587px;width:18px;height:5px;background:#6b6b6b"></div>
<div class="a" style="left:381px;top:587px;width:18px;height:5px;background:#6b6b6b"></div>
<div class="a" style="left:380px;top:576px;width:1px;height:11px;background:#393939"></div>
<div class="t" style="left:383px;top:573.9px;letter-spacing:0.5px;color:#d2d2d2">9</div>
<div class="a" style="left:400px;top:587px;width:18px;height:5px;background:#6b6b6b"></div>
<div class="a" style="left:419px;top:587px;width:18px;height:5px;background:#6b6b6b"></div>
<div class="a" style="left:438px;top:587px;width:18px;height:5px;background:#6b6b6b"></div>
<div class="a" style="left:437px;top:576px;width:1px;height:11px;background:#393939"></div>
<div class="t" style="left:440px;top:573.9px;letter-spacing:0.5px;color:#d2d2d2">12</div>
<div class="a" style="left:457px;top:587px;width:18px;height:5px;background:#6b6b6b"></div>
<div class="a" style="left:476px;top:587px;width:18px;height:5px;background:#6b6b6b"></div>
<div class="a" style="left:495px;top:587px;width:18px;height:5px;background:#6b6b6b"></div>
<div class="a" style="left:494px;top:576px;width:1px;height:11px;background:#393939"></div>
<div class="t" style="left:497px;top:573.9px;letter-spacing:0.5px;color:#d2d2d2">15</div>
<div class="a" style="left:514px;top:587px;width:18px;height:5px;background:#6b6b6b"></div>
<div class="a" style="left:533px;top:587px;width:18px;height:5px;background:#6b6b6b"></div>
<div class="a" style="left:552px;top:587px;width:18px;height:5px;background:#6b6b6b"></div>
<div class="a" style="left:551px;top:576px;width:1px;height:11px;background:#393939"></div>
<div class="t" style="left:554px;top:573.9px;letter-spacing:0.5px;color:#d2d2d2">18</div>
<div class="a" style="left:571px;top:587px;width:18px;height:5px;background:#6b6b6b"></div>
<div class="a" style="left:590px;top:587px;width:18px;height:5px;background:#6b6b6b"></div>
<div class="a" style="left:609px;top:587px;width:18px;height:5px;background:#6b6b6b"></div>
<div class="a" style="left:608px;top:576px;width:1px;height:11px;background:#393939"></div>
<div class="t" style="left:611px;top:573.9px;letter-spacing:0.5px;color:#d2d2d2">21</div>
<div class="a" style="left:628px;top:587px;width:18px;height:5px;background:#6b6b6b"></div>
<div class="a" style="left:647px;top:587px;width:18px;height:5px;background:#6b6b6b"></div>
<div class="a" style="left:666px;top:587px;width:18px;height:5px;background:#6b6b6b"></div>
<div class="a" style="left:665px;top:576px;width:1px;height:11px;background:#393939"></div>
<div class="t" style="left:668px;top:573.9px;letter-spacing:0.5px;color:#d2d2d2">24</div>
<div class="a" style="left:685px;top:587px;width:18px;height:5px;background:#6b6b6b"></div>
<div class="a" style="left:704px;top:587px;width:18px;height:5px;background:#6b6b6b"></div>
<div class="a" style="left:723px;top:587px;width:18px;height:5px;background:#6b6b6b"></div>
<div class="a" style="left:722px;top:576px;width:1px;height:11px;background:#393939"></div>
<div class="t" style="left:725px;top:573.9px;letter-spacing:0.5px;color:#d2d2d2">27</div>
<div class="a" style="left:742px;top:587px;width:18px;height:5px;background:#6b6b6b"></div>
<div class="a" style="left:761px;top:587px;width:18px;height:5px;background:#6b6b6b"></div>
<div class="a" style="left:780px;top:587px;width:18px;height:5px;background:#6b6b6b"></div>
<div class="a" style="left:779px;top:576px;width:1px;height:11px;background:#393939"></div>
<div class="t" style="left:782px;top:573.9px;letter-spacing:0.5px;color:#d2d2d2">30</div>
<div class="a" style="left:799px;top:587px;width:18px;height:5px;background:#6b6b6b"></div>
<div class="a" style="left:818px;top:587px;width:18px;height:5px;background:#6b6b6b"></div>
<div class="a" style="left:837px;top:587px;width:18px;height:5px;background:#6b6b6b"></div>
<div class="a" style="left:836px;top:576px;width:1px;height:11px;background:#393939"></div>
<div class="t" style="left:839px;top:573.9px;letter-spacing:0.5px;color:#d2d2d2">33</div>
<div class="a" style="left:856px;top:587px;width:18px;height:5px;background:#6b6b6b"></div>
<div class="a" style="left:875px;top:587px;width:18px;height:5px;background:#6b6b6b"></div>
<div class="a" style="left:894px;top:587px;width:18px;height:5px;background:#6b6b6b"></div>
<div class="a" style="left:893px;top:576px;width:1px;height:11px;background:#393939"></div>
<div class="t" style="left:896px;top:573.9px;letter-spacing:0.5px;color:#d2d2d2">36</div>
<div class="a" style="left:913px;top:587px;width:18px;height:5px;background:#6b6b6b"></div>
<div class="a" style="left:932px;top:587px;width:18px;height:5px;background:#6b6b6b"></div>
<div class="a" style="left:951px;top:587px;width:18px;height:5px;background:#6b6b6b"></div>
<div class="a" style="left:950px;top:576px;width:1px;height:11px;background:#393939"></div>
<div class="t" style="left:953px;top:573.9px;letter-spacing:0.5px;color:#d2d2d2">39</div>
<div class="a" style="left:970px;top:587px;width:18px;height:5px;background:#6b6b6b"></div>
<div class="a" style="left:989px;top:587px;width:18px;height:5px;background:#6b6b6b"></div>
<div class="a" style="left:1008px;top:587px;width:18px;height:5px;background:#6b6b6b"></div>
<div class="a" style="left:1007px;top:576px;width:1px;height:11px;background:#393939"></div>
<div class="t" style="left:1010px;top:573.9px;letter-spacing:0.5px;color:#d2d2d2">42</div>
<div class="a" style="left:1027px;top:587px;width:18px;height:5px;background:#6b6b6b"></div>
<div class="a" style="left:1046px;top:587px;width:18px;height:5px;background:#6b6b6b"></div>
<div class="a" style="left:1065px;top:587px;width:18px;height:5px;background:#6b6b6b"></div>
<div class="a" style="left:1064px;top:576px;width:1px;height:11px;background:#393939"></div>
<div class="t" style="left:1067px;top:573.9px;letter-spacing:0.5px;color:#d2d2d2">45</div>
<div class="a" style="left:1084px;top:587px;width:18px;height:5px;background:#6b6b6b"></div>
<div class="a" style="left:1103px;top:587px;width:18px;height:5px;background:#6b6b6b"></div>
<div class="a" style="left:1122px;top:587px;width:18px;height:5px;background:#6b6b6b"></div>
<div class="a" style="left:1121px;top:576px;width:1px;height:11px;background:#393939"></div>
<div class="t" style="left:1124px;top:573.9px;letter-spacing:0.5px;color:#d2d2d2">48</div>
<div class="a" style="left:1141px;top:587px;width:18px;height:5px;background:#6b6b6b"></div>
<div class="a" style="left:1160px;top:587px;width:18px;height:5px;background:#6b6b6b"></div>
<div class="a" style="left:1179px;top:587px;width:18px;height:5px;background:#6b6b6b"></div>
<div class="a" style="left:1178px;top:576px;width:1px;height:11px;background:#393939"></div>
<div class="t" style="left:1181px;top:573.9px;letter-spacing:0.5px;color:#d2d2d2">51</div>
<div class="a" style="left:1198px;top:587px;width:18px;height:5px;background:#6b6b6b"></div>
<div class="a" style="left:4px;top:593px;width:206px;height:2px;background:#4f7394"></div>
<div class="a" style="left:4px;top:595px;width:206px;height:19px;background:#393939"></div>
<div class="a" style="left:4px;top:614px;width:206px;height:2px;background:#4f7394"></div>
<div class="a" style="left:4px;top:616px;width:206px;height:1px;background:#333"></div>
<div class="a" style="left:4px;top:617px;width:206px;height:23px;background:#393939"></div>
<div class="a" style="left:4px;top:640px;width:206px;height:2px;background:#404040"></div>
<div class="a" style="left:4px;top:642px;width:206px;height:22px;background:#393939"></div>
<div class="a" style="left:210px;top:593px;width:979px;height:93px;background:#3a3a3a"></div>
<div class="a" style="left:210px;top:593px;width:979px;height:23px;background:#333a41"></div>
<div class="a" style="left:210px;top:593px;width:18px;height:23px;background:#3a424a"></div>
<div class="a" style="left:229px;top:593px;width:18px;height:23px;background:#3a424a"></div>
<div class="a" style="left:229px;top:628px;width:18px;height:1px;background:#4d6580"></div>
<div class="a" style="left:248px;top:593px;width:18px;height:23px;background:#3a424a"></div>
<div class="a" style="left:248px;top:628px;width:18px;height:1px;background:#4d6580"></div>
<div class="a" style="left:267px;top:593px;width:18px;height:23px;background:#3a424a"></div>
<div class="a" style="left:267px;top:628px;width:18px;height:1px;background:#4d6580"></div>
<div class="a" style="left:286px;top:593px;width:18px;height:23px;background:#3a424a"></div>
<div class="a" style="left:286px;top:628px;width:18px;height:1px;background:#4d6580"></div>
<div class="a" style="left:305px;top:593px;width:18px;height:23px;background:#3a424a"></div>
<div class="a" style="left:305px;top:628px;width:18px;height:1px;background:#4d6580"></div>
<div class="a" style="left:324px;top:593px;width:18px;height:23px;background:#3a424a"></div>
<div class="a" style="left:324px;top:628px;width:18px;height:1px;background:#4d6580"></div>
<div class="a" style="left:343px;top:593px;width:18px;height:23px;background:#3a424a"></div>
<div class="a" style="left:343px;top:628px;width:18px;height:1px;background:#4d6580"></div>
<div class="a" style="left:362px;top:593px;width:18px;height:23px;background:#3a424a"></div>
<div class="a" style="left:362px;top:628px;width:18px;height:1px;background:#4d6580"></div>
<div class="a" style="left:381px;top:593px;width:18px;height:23px;background:#3a424a"></div>
<div class="a" style="left:381px;top:628px;width:18px;height:1px;background:#4d6580"></div>
<div class="a" style="left:400px;top:593px;width:18px;height:23px;background:#3a424a"></div>
<div class="a" style="left:400px;top:628px;width:18px;height:1px;background:#4d6580"></div>
<div class="a" style="left:419px;top:593px;width:18px;height:23px;background:#3a424a"></div>
<div class="a" style="left:419px;top:628px;width:18px;height:1px;background:#4d6580"></div>
<div class="a" style="left:438px;top:593px;width:18px;height:23px;background:#3a424a"></div>
<div class="a" style="left:438px;top:628px;width:18px;height:1px;background:#4d6580"></div>
<div class="a" style="left:457px;top:593px;width:18px;height:23px;background:#3a424a"></div>
<div class="a" style="left:457px;top:628px;width:18px;height:1px;background:#4d6580"></div>
<div class="a" style="left:476px;top:593px;width:18px;height:23px;background:#3a424a"></div>
<div class="a" style="left:476px;top:628px;width:18px;height:1px;background:#4d6580"></div>
<div class="a" style="left:495px;top:593px;width:18px;height:23px;background:#3a424a"></div>
<div class="a" style="left:495px;top:628px;width:18px;height:1px;background:#4d6580"></div>
<div class="a" style="left:514px;top:593px;width:18px;height:23px;background:#3a424a"></div>
<div class="a" style="left:514px;top:628px;width:18px;height:1px;background:#4d6580"></div>
<div class="a" style="left:533px;top:593px;width:18px;height:23px;background:#3a424a"></div>
<div class="a" style="left:533px;top:628px;width:18px;height:1px;background:#4d6580"></div>
<div class="a" style="left:552px;top:593px;width:18px;height:23px;background:#3a424a"></div>
<div class="a" style="left:552px;top:628px;width:18px;height:1px;background:#4d6580"></div>
<div class="a" style="left:571px;top:593px;width:18px;height:23px;background:#3a424a"></div>
<div class="a" style="left:571px;top:628px;width:18px;height:1px;background:#4d6580"></div>
<div class="a" style="left:590px;top:593px;width:18px;height:23px;background:#3a424a"></div>
<div class="a" style="left:590px;top:628px;width:18px;height:1px;background:#4d6580"></div>
<div class="a" style="left:609px;top:593px;width:18px;height:23px;background:#3a424a"></div>
<div class="a" style="left:609px;top:628px;width:18px;height:1px;background:#4d6580"></div>
<div class="a" style="left:628px;top:593px;width:18px;height:23px;background:#3a424a"></div>
<div class="a" style="left:628px;top:628px;width:18px;height:1px;background:#4d6580"></div>
<div class="a" style="left:647px;top:593px;width:18px;height:23px;background:#3a424a"></div>
<div class="a" style="left:647px;top:628px;width:18px;height:1px;background:#4d6580"></div>
<div class="a" style="left:666px;top:593px;width:18px;height:23px;background:#3a424a"></div>
<div class="a" style="left:666px;top:628px;width:18px;height:1px;background:#4d6580"></div>
<div class="a" style="left:685px;top:593px;width:18px;height:23px;background:#3a424a"></div>
<div class="a" style="left:685px;top:628px;width:18px;height:1px;background:#4d6580"></div>
<div class="a" style="left:704px;top:593px;width:18px;height:23px;background:#3a424a"></div>
<div class="a" style="left:704px;top:628px;width:18px;height:1px;background:#4d6580"></div>
<div class="a" style="left:723px;top:593px;width:18px;height:23px;background:#3a424a"></div>
<div class="a" style="left:723px;top:628px;width:18px;height:1px;background:#4d6580"></div>
<div class="a" style="left:742px;top:593px;width:18px;height:23px;background:#3a424a"></div>
<div class="a" style="left:742px;top:628px;width:18px;height:1px;background:#4d6580"></div>
<div class="a" style="left:761px;top:593px;width:18px;height:23px;background:#3a424a"></div>
<div class="a" style="left:761px;top:628px;width:18px;height:1px;background:#4d6580"></div>
<div class="a" style="left:780px;top:593px;width:18px;height:23px;background:#3a424a"></div>
<div class="a" style="left:780px;top:628px;width:18px;height:1px;background:#4d6580"></div>
<div class="a" style="left:799px;top:593px;width:18px;height:23px;background:#3a424a"></div>
<div class="a" style="left:799px;top:628px;width:18px;height:1px;background:#4d6580"></div>
<div class="a" style="left:818px;top:593px;width:18px;height:23px;background:#3a424a"></div>
<div class="a" style="left:818px;top:628px;width:18px;height:1px;background:#4d6580"></div>
<div class="a" style="left:837px;top:593px;width:18px;height:23px;background:#3a424a"></div>
<div class="a" style="left:837px;top:628px;width:18px;height:1px;background:#4d6580"></div>
<div class="a" style="left:856px;top:593px;width:18px;height:23px;background:#3a424a"></div>
<div class="a" style="left:856px;top:628px;width:18px;height:1px;background:#4d6580"></div>
<div class="a" style="left:875px;top:593px;width:18px;height:23px;background:#3a424a"></div>
<div class="a" style="left:875px;top:628px;width:18px;height:1px;background:#4d6580"></div>
<div class="a" style="left:894px;top:593px;width:18px;height:23px;background:#3a424a"></div>
<div class="a" style="left:894px;top:628px;width:18px;height:1px;background:#4d6580"></div>
<div class="a" style="left:913px;top:593px;width:18px;height:23px;background:#3a424a"></div>
<div class="a" style="left:913px;top:628px;width:18px;height:1px;background:#4d6580"></div>
<div class="a" style="left:932px;top:593px;width:18px;height:23px;background:#3a424a"></div>
<div class="a" style="left:932px;top:628px;width:18px;height:1px;background:#4d6580"></div>
<div class="a" style="left:951px;top:593px;width:18px;height:23px;background:#3a424a"></div>
<div class="a" style="left:951px;top:628px;width:18px;height:1px;background:#4d6580"></div>
<div class="a" style="left:970px;top:593px;width:18px;height:23px;background:#3a424a"></div>
<div class="a" style="left:970px;top:628px;width:18px;height:1px;background:#4d6580"></div>
<div class="a" style="left:989px;top:593px;width:18px;height:23px;background:#3a424a"></div>
<div class="a" style="left:989px;top:628px;width:18px;height:1px;background:#4d6580"></div>
<div class="a" style="left:1008px;top:593px;width:18px;height:23px;background:#3a424a"></div>
<div class="a" style="left:1008px;top:628px;width:18px;height:1px;background:#4d6580"></div>
<div class="a" style="left:1027px;top:593px;width:18px;height:23px;background:#3a424a"></div>
<div class="a" style="left:1027px;top:628px;width:18px;height:1px;background:#4d6580"></div>
<div class="a" style="left:1046px;top:593px;width:18px;height:23px;background:#3a424a"></div>
<div class="a" style="left:1046px;top:628px;width:18px;height:1px;background:#4d6580"></div>
<div class="a" style="left:1065px;top:593px;width:18px;height:23px;background:#3a424a"></div>
<div class="a" style="left:1065px;top:628px;width:18px;height:1px;background:#4d6580"></div>
<div class="a" style="left:1084px;top:593px;width:18px;height:23px;background:#3a424a"></div>
<div class="a" style="left:1084px;top:628px;width:18px;height:1px;background:#4d6580"></div>
<div class="a" style="left:1103px;top:593px;width:18px;height:23px;background:#3a424a"></div>
<div class="a" style="left:1103px;top:628px;width:18px;height:1px;background:#4d6580"></div>
<div class="a" style="left:1122px;top:593px;width:18px;height:23px;background:#3a424a"></div>
<div class="a" style="left:1122px;top:628px;width:18px;height:1px;background:#4d6580"></div>
<div class="a" style="left:1141px;top:593px;width:18px;height:23px;background:#3a424a"></div>
<div class="a" style="left:1141px;top:628px;width:18px;height:1px;background:#4d6580"></div>
<div class="a" style="left:1160px;top:593px;width:18px;height:23px;background:#3a424a"></div>
<div class="a" style="left:1160px;top:628px;width:18px;height:1px;background:#4d6580"></div>
<div class="a" style="left:1179px;top:593px;width:18px;height:23px;background:#3a424a"></div>
<div class="a" style="left:1179px;top:628px;width:18px;height:1px;background:#4d6580"></div>
<div class="a" style="left:1198px;top:593px;width:18px;height:23px;background:#3a424a"></div>
<div class="a" style="left:1198px;top:628px;width:18px;height:1px;background:#4d6580"></div>
<div class="a" style="left:210px;top:616px;width:979px;height:1px;background:#333"></div>
<div class="a" style="left:210px;top:640px;width:979px;height:2px;background:#3c3c3c"></div>
<div class="a" style="left:210px;top:664px;width:979px;height:22px;background:#383838"></div>
<div class="a" style="left:210px;top:593px;width:2px;height:23px;background:#e69a33"></div>
<div class="a" style="left:226px;top:593px;width:2px;height:23px;background:#e69a33"></div>
<div class="a" style="left:210px;top:617px;width:2px;height:23px;background:#e69a33"></div>
<div class="a" style="left:226px;top:617px;width:2px;height:23px;background:#e69a33"></div>
<div class="a" style="left:210px;top:642px;width:2px;height:22px;background:#e69a33"></div>
<div class="a" style="left:226px;top:642px;width:2px;height:22px;background:#e69a33"></div>
<div class="a" style="left:212px;top:617px;width:14px;height:23px;background:#8a7b62"></div>
<div class="a" style="left:216px;top:602px;width:5px;height:5px;border-radius:50%;background:#e69a33"></div>
<svg style="left:10px;top:599px" width="10" height="10" viewBox="0 0 10 10"><path d="M5.5 0.5 L9.5 4.5 L8 5 L6.5 7 L6.5 8.5 L1.5 3.5 L3 3.5 L5 2Z" fill="#6a6a6a"/><path d="M3.5 6.5 L0.5 9.5" stroke="#6a6a6a" stroke-width="1"/></svg>
<div class="t" style="left:24.2px;top:599.6px;letter-spacing:0.23px">Text 1</div>
<svg style="left:157px;top:598px" width="16" height="15" viewBox="0 0 16 15"><path d="M0.8 8.6 A7.2 7.9 0 0 1 15.2 8.6" fill="none" stroke="#d8d8d8" stroke-width="1.2"/><circle cx="8" cy="5" r="3.6" fill="#d8d8d8"/><path d="M2.2 10.7 Q8 15.3 13.8 10.7" fill="none" stroke="#d8d8d8" stroke-width="1.0"/></svg>
<svg style="left:177px;top:598px" width="13" height="15" viewBox="0 0 13 15"><path d="M6.6 1 Q10.2 1.6 10.4 5.5 V6.5" fill="none" stroke="#7a7a7a" stroke-width="1.7"/><rect x="0" y="6" width="12.3" height="8" fill="#7a7a7a"/></svg>
<svg style="left:193px;top:599px" width="15" height="12" viewBox="0 0 15 12"><path d="M14.2 0.8 Q11.5 6.8 8.3 9.3 Q5.8 11 3.2 10.3 Q0.8 9.5 1.3 6.2 Q2.2 1.2 6.3 1.1 Q9.2 1.2 10.4 6.2 Q11.3 10.2 14 10.3" fill="none" stroke="#7a7a7a" stroke-width="2.05" stroke-linecap="round"/></svg>
<svg style="left:10px;top:623px" width="10" height="10" viewBox="0 0 10 10"><path d="M5.5 0.5 L9.5 4.5 L8 5 L6.5 7 L6.5 8.5 L1.5 3.5 L3 3.5 L5 2Z" fill="#d8d8d8"/><path d="M3.5 6.5 L0.5 9.5" stroke="#d8d8d8" stroke-width="1"/></svg>
<div class="t" style="left:24.2px;top:624.4px;letter-spacing:0.34px">Paint Layer 1</div>
<svg style="left:121px;top:622px" width="16" height="15" viewBox="0 0 16 15"><path d="M0.8 8.6 A7.2 7.9 0 0 1 15.2 8.6" fill="none" stroke="#d8d8d8" stroke-width="1.2"/><circle cx="8" cy="5" r="3.6" fill="#d8d8d8"/><path d="M2.2 10.7 Q8 15.3 13.8 10.7" fill="none" stroke="#d8d8d8" stroke-width="1.0"/></svg>
<svg style="left:141px;top:622px" width="13" height="15" viewBox="0 0 13 15"><path d="M6.6 1 Q10.2 1.6 10.4 5.5 V6.5" fill="none" stroke="#7a7a7a" stroke-width="1.7"/><rect x="0" y="6" width="12.3" height="8" fill="#7a7a7a"/></svg>
<svg style="left:157px;top:623px" width="15" height="12" viewBox="0 0 15 12"><path d="M14.2 0.8 Q11.5 6.8 8.3 9.3 Q5.8 11 3.2 10.3 Q0.8 9.5 1.3 6.2 Q2.2 1.2 6.3 1.1 Q9.2 1.2 10.4 6.2 Q11.3 10.2 14 10.3" fill="none" stroke="#7a7a7a" stroke-width="2.05" stroke-linecap="round"/></svg>
<svg style="left:175px;top:622px" width="15" height="15"><rect x="0" y="0" width="5" height="5" fill="#535353"/><rect x="0" y="5" width="5" height="5" fill="#737373"/><rect x="0" y="10" width="5" height="5" fill="#535353"/><rect x="5" y="0" width="5" height="5" fill="#737373"/><rect x="5" y="5" width="5" height="5" fill="#535353"/><rect x="5" y="10" width="5" height="5" fill="#737373"/><rect x="10" y="0" width="5" height="5" fill="#535353"/><rect x="10" y="5" width="5" height="5" fill="#737373"/><rect x="10" y="10" width="5" height="5" fill="#535353"/></svg>
<svg style="left:196px;top:625px" width="8" height="11" viewBox="0 0 8 11"><path d="M4 0 A3.8 3.9 0 0 1 7.8 3.9 Q7.8 5.8 5.6 7.3 V9.8 Q5.6 11 4 11 Q2.4 11 2.4 9.8 V7.3 Q0.2 5.8 0.2 3.9 A3.8 3.9 0 0 1 4 0Z" fill="#7a7a7a"/></svg>
<svg style="left:10px;top:647px" width="10" height="10" viewBox="0 0 10 10"><path d="M5.5 0.5 L9.5 4.5 L8 5 L6.5 7 L6.5 8.5 L1.5 3.5 L3 3.5 L5 2Z" fill="#d8d8d8"/><path d="M3.5 6.5 L0.5 9.5" stroke="#d8d8d8" stroke-width="1"/></svg>
<div class="t" style="left:24.2px;top:648.2px;letter-spacing:0.48px">Background</div>
<svg style="left:139px;top:646px" width="16" height="15" viewBox="0 0 16 15"><path d="M0.8 8.6 A7.2 7.9 0 0 1 15.2 8.6" fill="none" stroke="#d8d8d8" stroke-width="1.2"/><circle cx="8" cy="5" r="3.6" fill="#d8d8d8"/><path d="M2.2 10.7 Q8 15.3 13.8 10.7" fill="none" stroke="#d8d8d8" stroke-width="1.0"/></svg>
<svg style="left:159px;top:646px" width="13" height="15" viewBox="0 0 13 15"><path d="M2.8 6.5 V5 A3.5 3.7 0 0 1 9.8 5 V6.5" fill="none" stroke="#d8d8d8" stroke-width="1.9"/><rect x="0.3" y="5.7" width="12.2" height="9" rx="0.6" fill="#d8d8d8"/></svg>
<svg style="left:175px;top:647px" width="15" height="12" viewBox="0 0 15 12"><path d="M14.2 0.8 Q11.5 6.8 8.3 9.3 Q5.8 11 3.2 10.3 Q0.8 9.5 1.3 6.2 Q2.2 1.2 6.3 1.1 Q9.2 1.2 10.4 6.2 Q11.3 10.2 14 10.3" fill="none" stroke="#7a7a7a" stroke-width="2.05" stroke-linecap="round"/></svg>
<svg style="left:193px;top:646px" width="15" height="15"><rect x="0" y="0" width="5" height="5" fill="#535353"/><rect x="0" y="5" width="5" height="5" fill="#737373"/><rect x="0" y="10" width="5" height="5" fill="#535353"/><rect x="5" y="0" width="5" height="5" fill="#737373"/><rect x="5" y="5" width="5" height="5" fill="#535353"/><rect x="5" y="10" width="5" height="5" fill="#737373"/><rect x="10" y="0" width="5" height="5" fill="#535353"/><rect x="10" y="5" width="5" height="5" fill="#737373"/><rect x="10" y="10" width="5" height="5" fill="#535353"/></svg>
</body></html>
